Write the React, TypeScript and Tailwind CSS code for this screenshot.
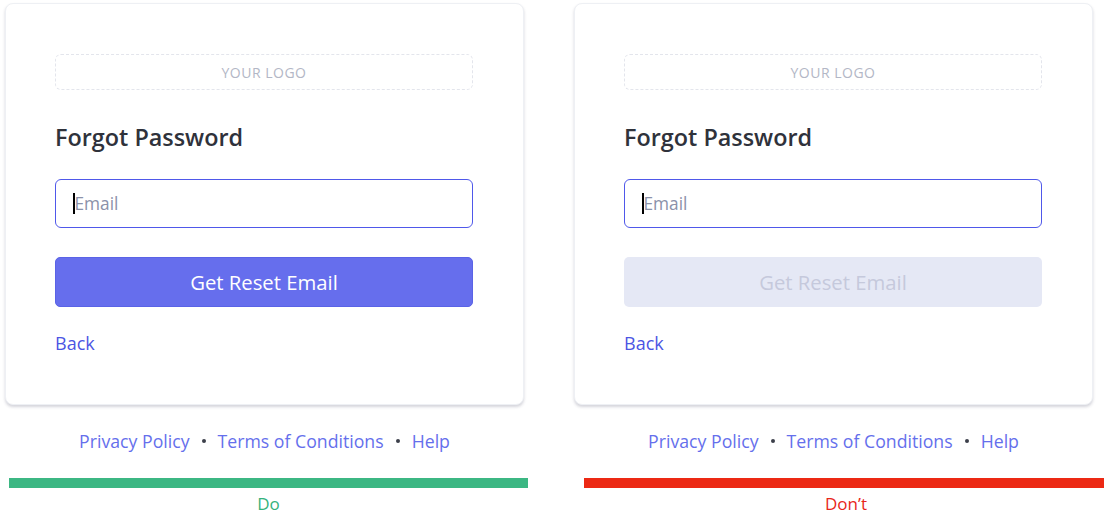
import React from "react";

const font = { fontFamily: "'Open Sans', Lato, 'Liberation Sans', sans-serif" };

function Card({ disabled }: { disabled?: boolean }) {
  return (
    <div className="w-[519px] h-[402px] mt-[3px] bg-white rounded-[8px] border border-[#eef0f4] shadow-[0_2px_3px_rgba(60,60,90,0.22)] pl-[49px] pr-[50px] pt-[50px] flex flex-col">
      <div className="h-[36px] border border-dashed border-[#e3e5ec] rounded-[6px] flex items-center justify-center text-[14px] text-[#b3b7c6] tracking-[0.5px]">
        YOUR LOGO
      </div>
      <div className="mt-[34px] h-[28px] flex items-center text-[23.4px] text-[#2f323b] font-semibold leading-none">
        Forgot Password
      </div>
      <div className="mt-[27px] h-[49px] border border-[#4f58ea] rounded-[6px] flex items-center pl-[17px]">
        <span className="inline-block w-[1.5px] h-[21px] bg-black" />
        <span className="text-[17.3px] text-[#8b91a9] leading-none">Email</span>
      </div>
      <div
        className={
          disabled
            ? "mt-[29px] h-[50px] rounded-[5px] bg-[#e5e8f5] flex items-center justify-center text-[20.3px] text-[#c5c9dc]"
            : "mt-[29px] h-[50px] rounded-[5px] bg-[#666eed] border border-[#5a63e6] flex items-center justify-center text-[20.3px] text-white"
        }
      >
        Get Reset Email
      </div>
      <div className="mt-[24px] h-[24px] flex items-center text-[18px] text-[#4c55e3]">Back</div>
    </div>
  );
}

function Footer() {
  return (
    <div className="h-[24px] mt-[24px] flex items-center justify-center gap-[10px] text-[17.7px] text-[#656fec]">
      <span>Privacy Policy</span>
      <span className="inline-block w-[4px] h-[4px] rounded-full bg-[#3c3f4a] mx-[2px]" />
      <span>Terms of Conditions</span>
      <span className="inline-block w-[4px] h-[4px] rounded-full bg-[#3c3f4a] mx-[2px]" />
      <span>Help</span>
    </div>
  );
}

export default function App() {
  return (
    <div className="w-[1104px] h-[513px] bg-white flex overflow-hidden" style={font}>
      <div className="w-[564px] flex flex-col">
        <div className="ml-[5px]">
          <Card />
        </div>
        <div className="w-[529px]">
          <Footer />
        </div>
        <div className="ml-[9px] mt-[25px] w-[519px] h-[10px] bg-[#3cb783]" />
        <div className="ml-[9px] w-[519px] mt-[7px] h-[17px] leading-[17px] text-center text-[17px] text-[#35b27c]">Do</div>
      </div>
      <div className="w-[540px] flex flex-col">
        <div className="ml-[10px]">
          <Card disabled />
        </div>
        <div className="ml-[10px] w-[519px]">
          <Footer />
        </div>
        <div className="ml-[20px] mt-[25px] w-[520px] h-[10px] bg-[#ec2914]" />
        <div className="ml-[20px] w-[524px] mt-[7px] h-[17px] leading-[17px] text-center text-[17px] text-[#e8261a]">Don’t</div>
      </div>
    </div>
  );
}
